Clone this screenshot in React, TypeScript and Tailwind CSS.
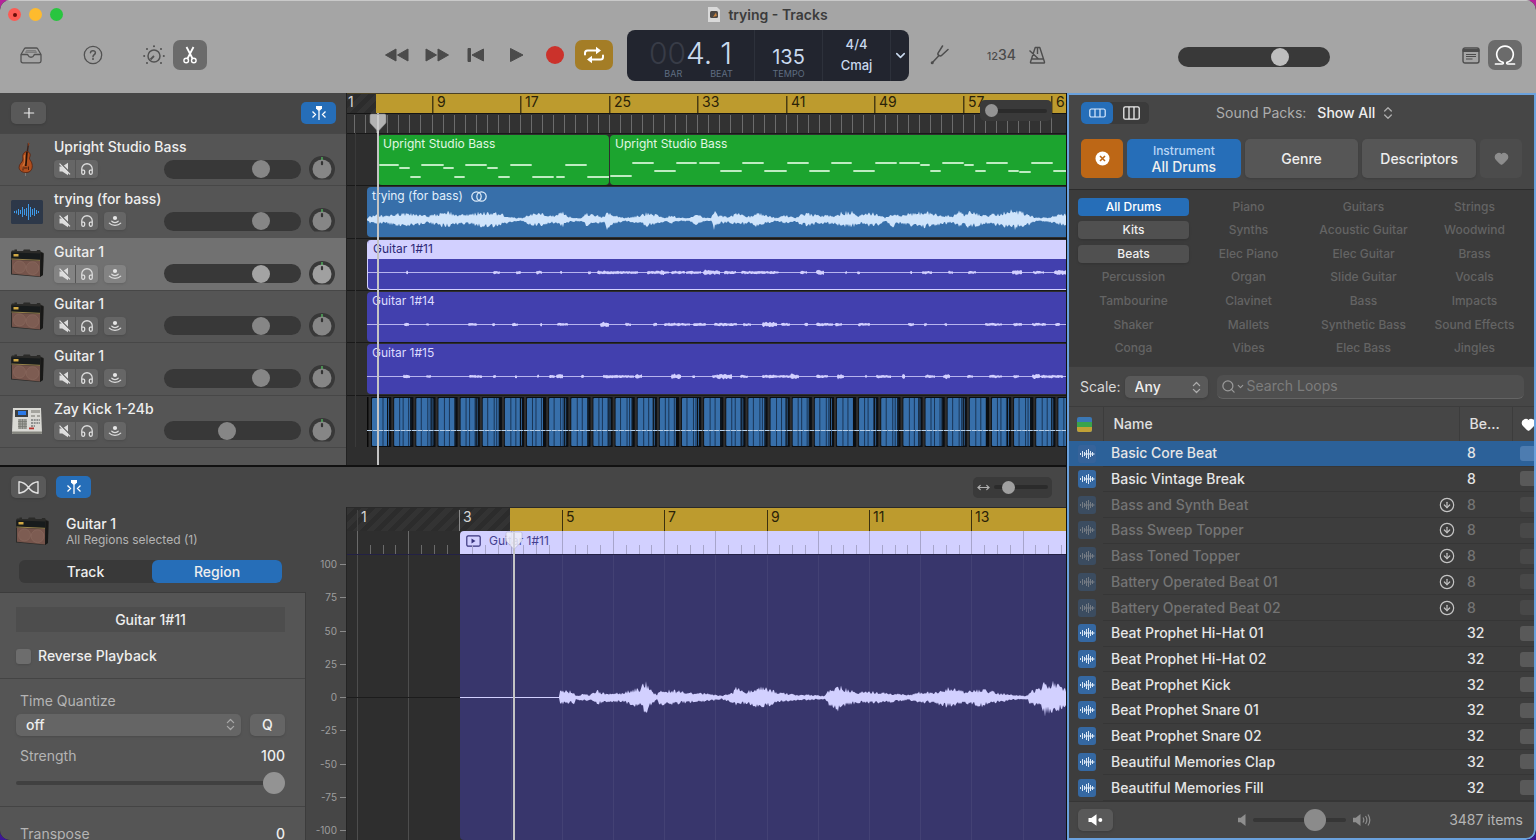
import React from 'react';
import { ChevronsUpDown, CircleArrowDown, Headphones, Heart, MoveHorizontal, Plus, Search, ChevronDown } from 'lucide-react';

type Point = [number, number];
type Span = [number, number, number];

/* ---------- timeline geometry ---------- */
const BAR = 11.07;
const barX = (bar: number) => (bar - 1) * BAR - 3;
const EDIT_BAR = 51.2;
const editX = (bar: number) => 10 + (bar - 1) * EDIT_BAR;

const noise = (n: number) => {
  const s = Math.sin(n * 127.1 + 11.7) * 43758.5453;
  return s - Math.floor(s);
};

const envelopePath = (points: Point[], mid: number, rough: number) => {
  const top: string[] = [];
  const bottom: string[] = [];
  const first = points[0][0];
  const last = points[points.length - 1][0];
  let k = 0;
  for (let x = first; x <= last; x += 1) {
    while (k < points.length - 2 && points[k + 1][0] < x) k += 1;
    const [x0, a0] = points[k];
    const [x1, a1] = points[k + 1];
    const amp = a0 + ((a1 - a0) * (x - x0)) / (x1 - x0);
    const up = amp * (1 - rough * noise(x));
    const down = amp * (1 - rough * noise(x + 900));
    top.push(`${x},${(mid - up).toFixed(1)}`);
    bottom.unshift(`${x},${(mid + down).toFixed(1)}`);
  }
  return `M${top.join('L')}L${bottom.join('L')}Z`;
};

const bassAudio: Point[] = [
  [367, 1], [370, 4], [376, 6], [384, 4], [393, 7], [405, 7], [415, 7], [428, 4], [438, 7], [448, 9], [460, 5], [473, 7],
  [485, 9], [495, 9], [505, 5], [515, 2], [522, 2], [530, 6], [545, 7], [552, 4], [563, 9], [567, 4], [576, 2], [582, 2],
  [586, 7], [600, 4], [604, 3], [607, 11], [613, 5], [625, 2], [636, 4], [648, 8], [660, 4], [665, 2], [671, 5], [678, 2],
  [690, 2], [696, 7], [704, 2], [711, 2], [714, 11], [719, 5], [728, 3], [737, 7], [750, 4], [757, 8], [766, 5], [775, 2],
  [785, 5], [795, 2], [800, 6], [808, 7], [818, 5], [836, 5], [842, 9], [852, 9], [858, 5], [870, 8], [880, 6], [885, 2],
  [893, 8], [900, 4], [908, 7], [925, 9], [940, 6], [953, 4], [959, 10], [964, 6], [969, 10], [985, 5], [1003, 8],
  [1013, 11], [1028, 7], [1036, 2], [1050, 3], [1060, 6], [1066, 7],
];

const takeAudio: Point[] = [
  [559, 1], [560, 8], [574, 7], [576, 2], [583, 4], [590, 3], [597, 8], [604, 5], [622, 5], [632, 9], [640, 11], [645, 18],
  [652, 8], [657, 2], [659, 8], [675, 8], [685, 6], [700, 5], [712, 4], [722, 2], [733, 6], [736, 11], [744, 7], [763, 12],
  [775, 7], [790, 4], [802, 3], [810, 3], [825, 2], [828, 8], [838, 14], [846, 10], [857, 6], [865, 7], [882, 6], [900, 4],
  [910, 3], [917, 6], [935, 6], [942, 10], [951, 11], [965, 7], [982, 10], [996, 6], [1013, 3], [1023, 2], [1028, 3],
  [1030, 8], [1039, 10], [1045, 19], [1051, 15], [1054, 18], [1061, 13], [1066, 10],
];

const take11: Span[] = [
  [405, 407, 1], [492, 499, 1], [515, 520, 1], [535, 541, 1], [559, 561, 1], [587, 590, 1], [596, 637, 1], [646, 668, 1],
  [659, 663, 2], [670, 684, 1], [685, 700, 1], [702, 719, 2], [723, 735, 1], [740, 778, 1], [799, 806, 1], [815, 823, 2],
  [844, 846, 1], [856, 859, 1], [909, 911, 1], [921, 931, 1], [947, 952, 1], [967, 975, 1], [1011, 1021, 2],
  [1032, 1043, 1], [1053, 1065, 2],
];
const take14: Span[] = [
  [404, 409, 1], [426, 429, 1], [468, 477, 1], [492, 495, 1], [512, 518, 1], [540, 542, 1], [557, 568, 1], [600, 609, 2],
  [625, 631, 1], [653, 657, 1], [664, 690, 1], [693, 706, 1], [714, 737, 1], [743, 751, 1], [762, 777, 2], [781, 790, 1],
  [804, 808, 1], [816, 833, 1], [835, 842, 1], [858, 870, 1], [908, 914, 1], [924, 927, 1], [944, 947, 1],
  [985, 1002, 1], [1013, 1022, 1], [1032, 1046, 1], [1055, 1060, 1],
];
const take15: Span[] = [
  [403, 410, 1], [426, 431, 1], [469, 482, 1], [493, 496, 1], [515, 517, 1], [537, 539, 1], [549, 555, 1], [556, 563, 2],
  [581, 584, 1], [603, 634, 1], [635, 642, 2], [671, 681, 2], [692, 695, 1], [712, 716, 1], [716, 732, 2], [740, 748, 1],
  [762, 790, 1], [790, 799, 2], [816, 828, 1], [837, 844, 2], [865, 867, 1], [876, 891, 1], [902, 905, 2],
  [925, 935, 1], [943, 950, 2], [967, 973, 1], [989, 1002, 1], [1013, 1019, 1], [1032, 1040, 2], [1040, 1063, 1],
];

const notesA: Span[] = [
  [379, 399, 164], [399, 410, 167], [410, 421, 176], [421, 444, 164], [443, 454, 167], [454, 465, 176], [465, 487, 164],
  [487, 498, 167], [498, 510, 176], [510, 532, 164], [532, 554, 176], [556, 565, 176], [565, 587, 164], [587, 610, 176],
];
const notesB: Span[] = [
  [610, 632, 175], [632, 654, 162], [654, 676, 170], [676, 697, 162], [699, 720, 162], [720, 742, 170], [742, 764, 162],
  [764, 787, 170], [787, 809, 162], [809, 830, 170], [831, 852, 162], [853, 875, 170], [875, 897, 162], [899, 920, 162],
  [920, 930, 164], [930, 941, 170], [942, 964, 162], [964, 974, 164], [975, 986, 170], [986, 1008, 162],
  [1008, 1019, 170], [1019, 1031, 171], [1031, 1053, 162], [1053, 1067, 170],
];

/* ---------- small drawings ---------- */
const CatchIcon = () => (
  <svg width="16" height="16" viewBox="0 0 16 16" fill="none" stroke="white" strokeWidth="1.3">
    <path d="M5 1h6v2.500L9 5.500H7L5 3.500z" fill="white" stroke="none" />
    <path d="M8 4v11M1.500 6.500 4.500 9.500 1.500 12.500M14.500 6.500 11.500 9.500l3 3" />
  </svg>
);

const AmpIcon = () => (
  <svg width="36" height="32" viewBox="0 0 36 32">
    <path d="M3 2.500h2.500v-1h2.500v1.500h6l.8-1.500h6l.8 1.500h6l.5-1h3l.5 1.500 3 1.500-.6 22-3.400 2L2 26.500V4z" fill="#2b2b29" />
    <path d="M31.500 4.500 34.500 5.500l-.6 21.500-2.900 2z" fill="#181817" />
    <path d="M2.500 4.500 31 5.500v6.500l-28.500-1z" fill="#171b1c" />
    <path d="M4.500 6h5v2.600l-5-.2z" fill="#d2a944" />
    <path d="M2.500 11 31 12.300" stroke="#b59a54" strokeWidth=".8" />
    <path d="M3 11.700 31 13V28.500L3 25.800z" fill="#75544b" />
    <circle cx="10.500" cy="19" r="6" fill="#7d5c52" stroke="#8b6b5f" strokeWidth=".6" />
    <circle cx="23.500" cy="20.200" r="6.400" fill="#7d5c52" stroke="#8b6b5f" strokeWidth=".6" />
  </svg>
);

const BassIcon = () => (
  <svg width="20" height="36" viewBox="0 0 20 36">
    <path d="M11.500 1 9.800 14" stroke="#3c2018" strokeWidth="1.500" />
    <path d="M11 .8 12.300 2l-1 1.500" stroke="#a14a22" fill="none" />
    <path
      d="M7 11c1.500-2 4.500-1.800 5.700.2 1.500 2.500-.6 4-.2 5.600.5 1.700 3.200 3.500 2.700 8.300-.5 4.200-3.300 5.400-6.400 5.400S2.300 29 2.100 25.500c-.2-3.500 3.200-4.900 3.700-7.500.4-2-.8-4.800 1.200-7z"
      fill="#b04f1e"
      stroke="#55200c"
      strokeWidth=".8"
    />
    <path d="M7.500 13c-.8 3 1 5 .2 7.500-.8 2-2.500 3-2.200 6" stroke="#d57638" fill="none" strokeWidth="1.200" />
    <path d="M10 10 8.800 24" stroke="#221109" strokeWidth="1.600" />
    <path d="M6 24.500v4M11.500 24.500v3.500M7 26h3.500" stroke="#32140a" strokeWidth=".8" />
    <path d="M8.500 31v3" stroke="#777" />
  </svg>
);

const AudioIcon = () => (
  <svg width="32" height="24" viewBox="0 0 32 24">
    <rect width="32" height="24" rx="1.500" fill="#2d3849" />
    <path d="M3.500 11v2M5.500 10.500v3M7.500 9v6M9.500 10v4M11.500 7v10M13.500 9v6M15.500 8v8M17.500 4v16M19.500 7v10M21.500 9v6M23.500 8v8M25.500 10v4M27.500 11v2" stroke="#3f9bea" />
  </svg>
);

const SamplerIcon = () => (
  <svg width="32" height="28" viewBox="0 0 32 28">
    <path d="M2 1h28l1 24.500q0 1.500-1.500 1.500h-27Q1 27 1 25.500z" fill="#d9d9d4" />
    <path d="M1 24.500h30v1q0 1.500-1.500 1.500h-27Q1 27 1 25.500z" fill="#85867f" />
    <rect x="4" y="3" width="13" height="7" fill="#3a3e42" />
    <rect x="7" y="4" width="8" height="4" fill="#2b7ae8" />
    <g fill="#a4a49e">
      <rect x="20" y="3" width="9" height="3" />
      <rect x="20" y="8" width="4" height="2" />
      <rect x="26" y="8" width="3" height="2" />
      <rect x="7" y="12" width="9" height="10" />
    </g>
    <path d="M7 14.500h9M7 17h9M7 19.500h9M9 12v10M11.500 12v10M14 12v10" stroke="#74756f" strokeWidth=".7" />
    <path d="M20 13h9M20 16h9M20 19h4" stroke="#777a79" strokeWidth="1.500" strokeDasharray="2 .7" />
    <rect x="18" y="20.500" width="5" height="1.800" fill="#b5322c" />
  </svg>
);

const MuteIcon = ({ back }: { back: string }) => (
  <svg width="14" height="14" viewBox="0 0 14 14">
    <path d="M1.500 4.600h2.800L10 .8v12.400L4.300 9.400H1.500z" fill="#dcdcdc" />
    <path d="M2.500 1.200 13.200 12" stroke={back} strokeWidth="1.600" />
    <path d="M1.500 1.600 12 12.400" stroke="#e2e2e2" strokeWidth="1.200" />
  </svg>
);

const MonitorIcon = () => (
  <svg width="14" height="12" viewBox="0 0 14 12" fill="none" stroke="#dcdcdc" strokeWidth="1.200">
    <circle cx="7" cy="3" r="2.100" fill="#e6e6e6" stroke="none" />
    <path d="M3.700 6.200C5 8 9 8 10.300 6.200M1.300 8.200c2.700 3 8.700 3 11.400 0" strokeLinecap="round" />
  </svg>
);

const Knob = ({ bright }: { bright?: boolean }) => (
  <svg width="28" height="28" viewBox="0 0 28 28" className="shrink-0" role="img" aria-label="Pan">
    <path d="M6.500 24.500A13 13 0 1 1 21.500 24.500" fill="#383838" />
    <circle cx="14" cy="14" r="9.500" fill={bright ? '#a0a0a0' : '#868686'} />
    <path d="M14 7v2.200" stroke="#333" strokeWidth="2.200" strokeLinecap="round" />
    <path d="M14 2v3" stroke="#56c763" strokeWidth="1.200" />
  </svg>
);

const LoopWave = ({ dim, flat }: { dim?: boolean; flat?: boolean }) => (
  <svg width="18" height="18" viewBox="0 0 18 18" className="block">
    <rect width="18" height="18" rx="3" fill={flat ? '#36639a' : dim ? '#3b4c60' : '#3568a2'} />
    <g stroke={dim ? '#747b83' : '#dce8f5'}>
      <path d="M2.500 8v2M4.500 6v6M6.500 7v4M8.500 5v8M10.500 4v10M12.500 6v6M14.500 7v4" />
      <path d="M7 9h9.500" strokeWidth="1.200" />
    </g>
  </svg>
);

const SpeakerIcon = ({ waves }: { waves?: boolean }) => (
  <svg width="20" height="14" viewBox="0 0 20 14" fill="none" stroke="#8e8e8e" strokeWidth="1.200">
    <path d="M1 4.800h2.800L8.500 1v12L3.800 9.200H1z" fill="#8e8e8e" stroke="none" />
    {waves && <path d="M11 4.500c1 1.500 1 3.500 0 5M13.500 3c1.700 2.500 1.700 5.500 0 8M16 1.500c2.300 3.500 2.300 7.500 0 11" />}
  </svg>
);

/* ---------- title bar ---------- */
const TitleBar = () => (
  <header className="flex h-[93px] shrink-0 flex-col border-t border-[#c9c9c9] bg-[#a5a5a5] text-[#4b4b4b]">
    <div className="grid h-[27px] grid-cols-[1fr_auto_1fr] items-center">
      <div className="flex gap-2 pl-2">
        <button aria-label="Close" className="flex size-[13px] items-center justify-center rounded-full bg-[#fd5b54]">
          <span className="size-1 rounded-full bg-[#6c0d08]" />
        </button>
        <button aria-label="Minimize" className="size-[13px] rounded-full bg-[#febb2e]" />
        <button aria-label="Zoom window" className="size-[13px] rounded-full bg-[#29c53f]" />
      </div>
      <h1 className="flex items-center gap-2 text-sm font-semibold text-[#3c3c3c]">
        <svg width="12" height="15" viewBox="0 0 12 15">
          <path d="M0 0h9l3 3v12H0z" fill="#d9d9d9" />
          <rect x="2" y="4" width="8" height="7" rx="1.500" fill="#4b4744" />
          <path d="M5 10 8 5.500l.8 3.500z" fill="#c9823c" />
        </svg>
        trying - Tracks
      </h1>
      <div />
    </div>
    <div className="flex h-[54px] items-center pl-5 pr-[14px]">
      <button aria-label="Library">
        <svg width="22" height="17" viewBox="0 0 22 17" fill="none" stroke="#525252" strokeWidth="1.300" strokeLinejoin="round">
          <path d="M1 7.500 4.500 1.500Q5 1 5.500 1h11q.5 0 1 .5L21 7.500V14q0 1.800-1.800 1.800H2.800Q1 15.800 1 14z" />
          <path d="M1 7.500h6.200c.6 0 .8.500 1 1 .8 2.300 4.800 2.300 5.600 0 .2-.5.400-1 1-1H21" />
          <path d="M5.500 5.500 6.500 3.500h9l1 2z" fill="#8a8a8a" stroke="#777" strokeWidth=".8" />
        </svg>
      </button>
      <button aria-label="Quick Help" className="ml-[41px]">
        <svg width="20" height="20" viewBox="0 0 20 20" fill="none" stroke="#525252" strokeWidth="1.300">
          <circle cx="10" cy="10" r="8.700" />
          <path d="M7.500 7.800C7.600 4.800 12.600 5 12.400 7.900 12.300 9.700 10 9.700 10 11.700" strokeLinecap="round" strokeWidth="1.500" />
          <circle cx="10" cy="14" r="1" fill="#525252" stroke="none" />
        </svg>
      </button>
      <button aria-label="Smart Controls" className="ml-10">
        <svg width="22" height="20" viewBox="0 0 22 20" fill="none" stroke="#525252" strokeWidth="1.500">
          <circle cx="11" cy="11" r="6" />
          <path d="M7.500 14.500 11 11" strokeWidth="1.800" />
          <path
            d="M11 1.200v.01M4 4v.01M18 4v.01M1.200 11v.01M20.800 11v.01M4 18v.01M18 18v.01"
            strokeWidth="2.100"
            strokeLinecap="round"
          />
        </svg>
      </button>
      <button aria-label="Editors" className="ml-2 flex h-[30px] w-[34px] items-center justify-center rounded-[7px] bg-[#6b6b6b]">
        <svg width="14" height="18" viewBox="0 0 14 18" fill="none" stroke="white" strokeWidth="1.400">
          <circle cx="3.200" cy="14.500" r="2.300" />
          <circle cx="10.800" cy="14.500" r="2.300" />
          <path d="M4.500 12.500 10.500 1M9.500 12.500 3.500 1" strokeWidth="1.800" />
        </svg>
      </button>

      <div className="flex-[177]" />

      <div className="flex items-center text-[#4b4b4b]">
        <button aria-label="Rewind">
          <svg width="25" height="16" viewBox="0 0 25 16" fill="currentColor" stroke="currentColor" strokeLinejoin="round">
            <path d="M12 2v12L1.500 8zM24 2v12L13.500 8z" />
          </svg>
        </button>
        <button aria-label="Forward" className="ml-4">
          <svg width="25" height="16" viewBox="0 0 25 16" fill="currentColor" stroke="currentColor" strokeLinejoin="round">
            <path d="M1 2v12l10.500-6zM13 2v12l10.500-6z" />
          </svg>
        </button>
        <button aria-label="Go to Beginning" className="ml-[17px]">
          <svg width="18" height="16" viewBox="0 0 18 16" fill="currentColor" stroke="currentColor" strokeLinejoin="round">
            <path d="M1 1.500h2.500v13H1zM16.500 2v12L5 8z" />
          </svg>
        </button>
        <button aria-label="Play" className="ml-6">
          <svg width="15" height="16" viewBox="0 0 15 16" fill="currentColor" stroke="currentColor" strokeLinejoin="round">
            <path d="M1.500 1.500v13L14 8z" />
          </svg>
        </button>
        <button aria-label="Record" className="ml-[22px] size-[18px] rounded-full bg-[#cb322b]" />
        <button aria-label="Cycle" className="ml-[11px] flex h-[30px] w-[38px] items-center justify-center rounded-[7px] bg-[#a47d26]">
          <svg width="22" height="18" viewBox="0 0 22 18" fill="none" stroke="white" strokeWidth="2" strokeLinecap="round">
            <path d="M2 8.500V7q0-2.500 2.500-2.500H14M20 9.500V11q0 2.500-2.500 2.500H8" />
            <path d="M13 .8 18 4.500 13 8.200zM9 9.800 4 13.500 9 17.200z" fill="white" stroke="none" />
          </svg>
        </button>

        <div className="ml-[14px] flex h-[51px] w-[282px] overflow-hidden rounded-lg bg-[#22252f] text-[#c9d9ee]">
          <div className="relative flex w-[128px] flex-col items-center border-r border-[#2d313b]">
            <div className="flex h-[48px] items-center text-[30px] font-light">
              <span className="text-[#383c47]">00</span>
              <span>4.</span>
              <span className="ml-2">1</span>
            </div>
            <div className="absolute inset-x-0 bottom-[3px] flex justify-center gap-7 pl-4 text-[9px] leading-[9px] text-[#5f6d81]">
              <span>BAR</span>
              <span>BEAT</span>
            </div>
          </div>
          <div className="flex w-[68px] flex-col items-center border-r border-[#2d313b] pt-[15px]">
            <span className="text-xl leading-6">135</span>
            <span className="text-[9px] leading-[9px] text-[#5f6d81]">TEMPO</span>
          </div>
          <div className="flex w-[68px] flex-col items-center justify-center gap-[5px] border-r border-[#2d313b] pb-[2px] text-[13px] font-medium leading-4">
            <span>4/4</span>
            <span>Cmaj</span>
          </div>
          <button aria-label="Display mode" className="flex flex-1 items-center justify-center">
            <ChevronDown size={15} strokeWidth={2.5} />
          </button>
        </div>

        <button aria-label="Tuner" className="ml-[21px]">
          <svg width="19" height="20" viewBox="0 0 19 20" fill="none" stroke="#4d4d4d" strokeWidth="1.500" strokeLinecap="round">
            <path d="M12.500 1 8.200 7.800c-1.200 2 1.800 4.200 3.600 2.500L18 4.500M9 10.500 2 18" />
            <circle cx="2.200" cy="17.800" r="1.500" fill="#4d4d4d" stroke="none" />
          </svg>
        </button>
        <button aria-label="Count In" className="ml-[38px] flex items-baseline text-sm font-medium leading-4">
          <span className="text-[10px]">1</span>
          <span className="text-[11px]">2</span>
          <span>34</span>
        </button>
        <button aria-label="Metronome" className="ml-3">
          <svg width="19" height="18" viewBox="0 0 19 18" fill="none" stroke="#4d4d4d" strokeWidth="1.400" strokeLinejoin="round">
            <path d="M7.200 1.500h4.600L16.500 16q.2 1-.8 1H3.300q-1 0-.8-1zM3.500 13h12M1.500 4.500l9 8.500M9.500 1v7" />
          </svg>
        </button>
      </div>

      <div className="flex-[131]" />
      <input
        type="range"
        aria-label="Master volume"
        defaultValue={70}
        className="mt-1 h-5 w-[152px] appearance-none rounded-full bg-[#393939] px-px [&::-webkit-slider-thumb]:size-[18px] [&::-webkit-slider-thumb]:appearance-none [&::-webkit-slider-thumb]:rounded-full [&::-webkit-slider-thumb]:bg-[#bebebe]"
      />
      <div className="flex-[132]" />

      <button aria-label="Note Pad">
        <svg width="18" height="17" viewBox="0 0 18 17" fill="none" stroke="#4d4d4d">
          <rect x="1" y="1" width="16" height="15" rx="2" strokeWidth="1.400" />
          <path d="M1 2.500h16v2H1z" fill="#4d4d4d" />
          <path d="M4 7.500h10M4 9.500h10M4 12h6.500" strokeWidth="1.200" />
        </svg>
      </button>
      <button aria-label="Loop Browser" className="ml-2 flex h-[30px] w-[34px] items-center justify-center rounded-[7px] bg-[#6b6b6b]">
        <svg width="22" height="21" viewBox="0 0 22 21" fill="none" stroke="white" strokeWidth="1.700" strokeLinecap="round" strokeLinejoin="round">
          <path d="M1.500 19h6.500q1.800-.2 1-1.600A8.300 8.300 0 1 1 13 17.400q-.8 1.400 1 1.600h6.500" />
        </svg>
      </button>
    </div>
  </header>
);

/* ---------- track list ---------- */
interface Track {
  name: string;
  icon: React.ReactNode;
  monitor: boolean;
  volume: number;
  selected?: boolean;
}

const tracks: Track[] = [
  { name: 'Upright Studio Bass', icon: <BassIcon />, monitor: false, volume: 74 },
  { name: 'trying (for bass)', icon: <AudioIcon />, monitor: true, volume: 74 },
  { name: 'Guitar 1', icon: <AmpIcon />, monitor: true, volume: 74, selected: true },
  { name: 'Guitar 1', icon: <AmpIcon />, monitor: true, volume: 74 },
  { name: 'Guitar 1', icon: <AmpIcon />, monitor: true, volume: 74 },
  { name: 'Zay Kick 1-24b', icon: <SamplerIcon />, monitor: true, volume: 45 },
];

const TrackRow = ({ name, icon, monitor, volume, selected }: Track) => {
  const chip = selected ? 'bg-[#838383]' : 'bg-[#666666]';
  return (
    <li className={`flex border-t ${selected ? 'border-[#717171] bg-[#717171]' : 'border-[#474747] bg-[#555555]'}`}>
      <div className="flex w-[54px] items-center justify-center">{icon}</div>
      <div className="flex flex-1 flex-col gap-[3px] pt-[5px]">
        <span className="text-sm font-medium leading-4 text-[#eeeeee]">{name}</span>
        <div className="flex h-[22px] items-center pr-[10px]">
          <div className={`flex h-[18px] overflow-hidden rounded shadow-sm ${chip}`}>
            <button aria-label="Mute" className="flex w-[22px] items-center justify-center border-r border-[#555555]">
              <MuteIcon back={selected ? '#838383' : '#666666'} />
            </button>
            <button aria-label="Solo" className="flex w-[22px] items-center justify-center text-[#dcdcdc]">
              <Headphones size={14} strokeWidth={2.2} />
            </button>
          </div>
          {monitor && (
            <button aria-label="Input monitoring" className={`ml-[6px] flex h-[18px] w-[22px] items-center justify-center rounded shadow-sm ${chip}`}>
              <MonitorIcon />
            </button>
          )}
          <input
            type="range"
            aria-label={`${name} volume`}
            defaultValue={volume}
            className={`ml-auto mr-[7px] h-[19px] w-[137px] appearance-none rounded-full bg-[#383838] [&::-webkit-slider-thumb]:size-[18px] [&::-webkit-slider-thumb]:appearance-none [&::-webkit-slider-thumb]:rounded-full ${
              selected ? '[&::-webkit-slider-thumb]:bg-[#a3a3a3]' : '[&::-webkit-slider-thumb]:bg-[#868686]'
            }`}
          />
          <Knob bright={selected} />
        </div>
      </div>
    </li>
  );
};

const TrackList = () => (
  <section className="flex w-[347px] shrink-0 flex-col border-r border-[#222222] bg-[#555555]">
    <div className="flex h-10 items-center justify-between bg-[#464646] pl-[11px] pr-[10px]">
      <button aria-label="Add track" className="flex h-[22px] w-[35px] items-center justify-center rounded-[5px] bg-[#595959] text-[#eeeeee] shadow-sm">
        <Plus size={16} strokeWidth={1.8} />
      </button>
      <button aria-label="Catch playhead" className="flex h-[22px] w-[35px] items-center justify-center rounded-[5px] bg-[#266eb8]">
        <CatchIcon />
      </button>
    </div>
    <ul className="grid h-[314px] grid-rows-6">
      {tracks.map((t, i) => (
        <TrackRow key={i} {...t} />
      ))}
    </ul>
    <div className="flex-1 border-t border-[#474747]" />
  </section>
);

/* ---------- arrangement ---------- */
const hatch = 'bg-[repeating-linear-gradient(135deg,#333333_0px,#333333_5px,#2c2c2c_5px,#2c2c2c_10px)]';

const Notes = ({ notes, x }: { notes: Span[]; x: number }) => (
  <svg width="460" height="50" viewBox={`${x} 135 460 50`} className="absolute left-0 top-0">
    {notes.map(([a, b, y], i) => (
      <rect key={i} x={a + 0.3} y={y} width={b - a - 0.6} height="2" fill="#bfecc2" />
    ))}
  </svg>
);

const GuitarWave = ({ spans }: { spans: Span[] }) => (
  <svg width="700" height="50" viewBox="367 0 700 50" className="absolute left-0 top-0">
    <path d="M367 32.500h700" stroke="#b7b4ee" />
    {spans.map(([a, b, amp], i) => (
      <path
        key={i}
        d={envelopePath([[a, 1], [Math.min(a + 1, b - 0.5), amp + 1], [b, amp + 0.5]], 32.5, 0.6)}
        fill="#d2d0ff"
      />
    ))}
  </svg>
);

const GuitarRegion = ({ name, spans, selected }: { name: string; spans: Span[]; selected?: boolean }) => (
  <div
    className={`relative ml-5 h-[50px] flex-1 overflow-hidden rounded-l-[4px] bg-[#4240ae] text-xs leading-[18px] ${
      selected ? 'border-b border-l border-[#d2d0ff] text-[#2d2875]' : 'text-[#dddcff]'
    }`}
  >
    <div className={`h-[19px] pl-[5px] ${selected ? 'bg-[#d2d0ff]' : ''}`}>{name}</div>
    <GuitarWave spans={spans} />
  </div>
);

const Drums = () => (
  <svg width="700" height="50" viewBox="367 0 700 50" className="ml-5 block h-[50px] flex-1" preserveAspectRatio="xMinYMin slice">
    <path d="M367 0h1.500v50H367z" fill="#080808" />
    {Array.from({ length: 32 }, (_, i) => {
      const x = 372 + i * 22.14;
      const cuts = i % 3 === 0 ? [5.5, 10.5] : i % 3 === 1 ? [5, 8.5, 14] : [4.5, 11, 13.5];
      return (
        <g key={i}>
          <rect x={x - 0.8} width="20" height="50" fill="#0b0e12" />
          <rect x={x} y="1" width="17" height="48" rx="1" fill="#376faa" />
          {cuts.map((c) => (
            <rect key={c} x={x + c} y="1" width="1" height="48" fill="#193557" />
          ))}
          <rect x={x + 15 + (i % 2)} y="0" width="1.2" height="50" fill="#0b0e12" />
        </g>
      );
    })}
    <path d="M367 33.500h700" stroke="#b8cfe8" strokeDasharray="5 .6" />
  </svg>
);

const Playhead = ({ light }: { light?: boolean }) => (
  <svg width="20" height="20" viewBox="0 0 20 20" className="absolute -left-[9px] top-0">
    <path
      d="M3.500 1h13q1.500 0 1.500 1.500v6.500q0 1-.8 1.800L10.500 18q-.5.500-1 0L2.800 10.800Q2 10 2 9V2.500Q2 1 3.500 1z"
      fill={light ? '#efeffa' : '#b3b3b3'}
      stroke={light ? '#a9a8c6' : '#8f8f8f'}
      strokeWidth=".6"
      opacity={light ? 0.85 : 1}
    />
    <path d="M10 2v18" stroke={light ? '#b9b9c4' : '#e4e4e4'} />
  </svg>
);

const laneClass = 'flex border-t border-[#191919] pt-px';

const Arrangement = () => (
  <section className="relative min-w-0 flex-1 overflow-hidden bg-[#2e2e2e]">
    <div className="relative h-10 overflow-hidden bg-[#323232] text-sm">
      <div className="flex h-5 border-t border-[#4a4126]">
        <div className={`w-[29px] ${hatch}`} />
        <div className="flex-1 bg-[#bd9b2e]" />
      </div>
      <svg className="absolute inset-0 size-full">
        <path d="M0 20.500h1400" stroke="#151515" />
        {Array.from({ length: 64 }, (_, i) => (
          <rect key={i} x={Math.round(barX(i + 2)) - 1} y="22" width="1" height="18" fill="#6c6c6c" />
        ))}
        {Array.from({ length: 8 }, (_, i) => (
          <rect key={i} x={Math.round(barX(9 + i * 8)) - 1} y="3" width="1.500" height="17" fill="#4a3c12" />
        ))}
      </svg>
      <span className="absolute left-px top-0 leading-[18px] text-[#d6d6d6]">1</span>
      {[9, 17, 25, 33, 41, 49, 57, 65].map((n) => (
        <span key={n} className="absolute top-0 leading-[18px] text-[#2a2208]" style={{ left: Math.round(barX(n)) + 4 }}>
          {n}
        </span>
      ))}
    </div>

    <div className="relative grid h-[314px] grid-rows-6">
      <div className={laneClass}>
        <div className="relative ml-[31px] h-[50px] w-[231px] overflow-hidden rounded-[4px] bg-[#1ca42f] pl-[5px] text-xs leading-[18px] text-[#e0f7e2]">
          Upright Studio Bass
          <Notes notes={notesA} x={378} />
        </div>
        <div className="relative ml-px h-[50px] flex-1 overflow-hidden rounded-l-[4px] bg-[#1ca42f] pl-[5px] text-xs leading-[18px] text-[#e0f7e2]">
          Upright Studio Bass
          <Notes notes={notesB} x={610} />
        </div>
      </div>
      <div className={laneClass}>
        <div className="relative ml-5 h-[50px] flex-1 overflow-hidden rounded-l-[4px] bg-[#376faa] pl-[5px] text-xs leading-[18px] text-[#e2effc]">
          <span className="flex items-center gap-2">
            trying (for bass)
            <svg width="16" height="11" viewBox="0 0 16 11" fill="none" stroke="#e2effc" strokeWidth="1.200">
              <circle cx="5.500" cy="5.500" r="4.700" />
              <circle cx="10.500" cy="5.500" r="4.700" />
            </svg>
          </span>
          <svg width="700" height="50" viewBox="367 0 700 50" className="absolute left-0 top-0">
            <path d={envelopePath(bassAudio, 32.5, 0.55)} fill="#cfe4fb" />
          </svg>
        </div>
      </div>
      <div className={laneClass}>
        <GuitarRegion name="Guitar 1#11" spans={take11} selected />
      </div>
      <div className={laneClass}>
        <GuitarRegion name="Guitar 1#14" spans={take14} />
      </div>
      <div className={laneClass}>
        <GuitarRegion name="Guitar 1#15" spans={take15} />
      </div>
      <div className={laneClass}>
        <Drums />
      </div>
      <div className="absolute inset-y-0 left-2 w-px bg-[#3a3a3a]" />
    </div>

    <div className="absolute bottom-0 left-[30px] top-5 w-[2px] bg-[#c4c4c4]">
      <Playhead />
    </div>
    <label className="absolute right-[14px] top-[7px] flex h-[21px] w-[72px] items-center rounded-[5px] bg-[#3a3a3a] px-[5px]">
      <input
        type="range"
        aria-label="Horizontal zoom"
        defaultValue={0}
        className="h-1 w-full appearance-none rounded-full bg-[#2b2b2b] [&::-webkit-slider-thumb]:size-[13px] [&::-webkit-slider-thumb]:appearance-none [&::-webkit-slider-thumb]:rounded-full [&::-webkit-slider-thumb]:bg-[#949494]"
      />
    </label>
  </section>
);

/* ---------- inspector and audio editor ---------- */
const Inspector = () => (
  <section className="flex w-[306px] shrink-0 flex-col text-sm text-[#eeeeee]">
    <div className="flex h-[49px] items-center gap-[16px] pl-[14px]">
      <AmpIcon />
      <div>
        <div className="font-medium leading-4">Guitar 1</div>
        <div className="text-xs leading-4 text-[#b4b4b4]">All Regions selected (1)</div>
      </div>
    </div>
    <div className="mx-[19px] mt-1 grid h-[23px] w-[263px] shrink-0 grid-cols-[133fr_130fr] rounded-[6px] bg-[#393939] font-medium leading-[22px]">
      <button>Track</button>
      <button className="rounded-[6px] bg-[#266eb8]">Region</button>
    </div>
    <div className="mt-[9px] flex flex-1 flex-col overflow-hidden border-r border-t border-[#3c3c3c] bg-[#555555]">
      <div className="flex h-[86px] shrink-0 flex-col border-b border-[#444444] px-4 pt-[14px]">
        <input
          aria-label="Region name"
          defaultValue="Guitar 1#11"
          className="h-[25px] w-[269px] bg-[#4d4d4d] text-center font-medium outline-none"
        />
        <label className="mt-4 flex items-center gap-[7px] font-medium leading-4">
          <input type="checkbox" className="size-[15px] appearance-none rounded-[3px] bg-[#6d6d6d] shadow-sm" />
          Reverse Playback
        </label>
      </div>
      <div className="h-32 shrink-0 border-b border-[#444444] px-4 pt-[14px]">
        <label htmlFor="quantize" className="block pl-1 leading-4 text-[#b4b4b4]">
          Time Quantize
        </label>
        <div className="mt-[5px] flex gap-[9px]">
          <div className="relative">
            <select
              id="quantize"
              className="block h-[22px] w-[225px] appearance-none rounded-[5px] bg-[#656565] pl-[10px] font-medium leading-5 shadow-sm outline-none"
            >
              <option>off</option>
            </select>
            <ChevronsUpDown size={15} className="pointer-events-none absolute right-[3px] top-[3px] text-[#a8a8a8]" />
          </div>
          <button className="h-[22px] w-[35px] rounded-[5px] bg-[#656565] font-medium leading-5 shadow-sm">Q</button>
        </div>
        <div className="mt-3 flex w-[269px] justify-between pl-1 leading-4">
          <label htmlFor="strength" className="text-[#b4b4b4]">
            Strength
          </label>
          <span className="font-medium">100</span>
        </div>
        <input
          id="strength"
          type="range"
          defaultValue={100}
          className="mt-[17px] block h-1 w-[269px] appearance-none rounded-full bg-[#404040] [&::-webkit-slider-thumb]:size-[22px] [&::-webkit-slider-thumb]:appearance-none [&::-webkit-slider-thumb]:rounded-full [&::-webkit-slider-thumb]:bg-[#939393]"
        />
      </div>
      <div className="flex w-[285px] justify-between pl-5 pt-[19px] leading-4">
        <span className="text-[#b4b4b4]">Transpose</span>
        <span className="font-medium">0</span>
      </div>
    </div>
  </section>
);

const EditorCanvas = () => (
  <section className="relative flex min-w-0 flex-1 flex-col overflow-hidden bg-[#2e2e2e]">
    <div className="relative flex h-6 shrink-0 border-t border-[#2a2a2a] text-sm">
      <div className={`w-[163px] ${hatch}`} />
      <div className="flex-1 bg-[#bd9b2e]" />
      <svg className="absolute inset-0 size-full">
        {[1, 3, 5, 7, 9, 11, 13].map((n) => (
          <rect
            key={n}
            x={Math.round(editX(n))}
            y="2"
            width="1"
            height="21"
            fill={n === 3 ? '#8a8a8a' : n === 1 ? '#444' : '#3c300e'}
          />
        ))}
      </svg>
      {[1, 3, 5, 7, 9, 11, 13].map((n) => (
        <span
          key={n}
          className={`absolute top-0 leading-[17px] ${n < 4 ? 'text-[#d6d6d6]' : 'text-[#2a2208]'}`}
          style={{ left: Math.round(editX(n)) + 4 }}
        >
          {n}
        </span>
      ))}
    </div>
    <div className="relative flex h-[23px] shrink-0">
      <div className="w-[113px] bg-[#2e2e2e]" />
      <div className="flex flex-1 items-center gap-2 rounded-tl-[4px] bg-[#d2d0ff] pb-[3px] pl-[6px] text-xs text-[#443f8f]">
        <svg width="15" height="12" viewBox="0 0 15 12" fill="none" stroke="#37337c" strokeWidth="1.200">
          <rect x=".8" y=".8" width="13.400" height="10.400" rx="1.500" />
          <path d="M5.500 3.500v5l4-2.500z" fill="#37337c" stroke="none" />
        </svg>
        Guitar 1#11
      </div>
      <svg className="absolute inset-0 size-full">
        {Array.from({ length: 60 }, (_, i) => {
          const x = Math.round(editX(1 + i / 4));
          const major = i % 4 === 0;
          return <rect key={i} x={x} y={major ? 0 : 14} width="1" height="23" fill={x < 111 ? '#6a6a6a' : '#a7a5cb'} opacity={i === 8 ? 0 : 1} />;
        })}
      </svg>
    </div>
    <div className="relative flex flex-1 border-t border-[#232145]">
      <div className="w-[113px]" />
      <div className="mb-[2px] flex-1 rounded-bl-[4px] bg-[#38366c]" />
      <svg className="absolute inset-0 size-full">
        {Array.from({ length: 15 }, (_, i) => (
          <rect key={i} x={Math.round(editX(i + 1))} width="1" height="100%" fill="white" opacity={i < 2 ? 0.15 : i === 2 ? 0 : 0.06} />
        ))}
      </svg>
      <svg width="720" height="40" viewBox="347 0 720 40" className="absolute left-0 top-1/2 -mt-[22px]">
        <path d="M347 20.500h113" stroke="#1c1c1c" />
        <path d="M460 20.500h100" stroke="#d2d0ff" strokeWidth="1.200" />
        <path d={envelopePath(takeAudio, 20.5, 0.5)} fill="#d2d0ff" />
      </svg>
    </div>
    <div className="absolute bottom-0 left-[166px] top-6 w-[2px] bg-[#c4c4c4]">
      <Playhead light />
    </div>
  </section>
);

const Editor = () => (
  <div className="flex flex-1 flex-col bg-[#464646]">
    <div className="flex h-10 shrink-0 items-center gap-[10px] pl-[11px] pr-[14px]">
      <button aria-label="Flex" className="flex h-[22px] w-[35px] items-center justify-center rounded-[5px] bg-[#595959] shadow-sm">
        <svg width="21" height="13" viewBox="0 0 21 13" fill="none" stroke="#e0e0e0" strokeWidth="1.400" strokeLinejoin="round">
          <path d="M1 .8v11.400Q7 11.500 10.500 6.500 14 1.500 20 .8v11.400Q14 11.500 10.500 6.500 7 1.500 1 .8z" />
        </svg>
      </button>
      <button aria-label="Catch playhead" className="flex h-[22px] w-[35px] items-center justify-center rounded-[5px] bg-[#266eb8]">
        <CatchIcon />
      </button>
      <label className="ml-auto flex h-[21px] w-[79px] items-center gap-1 rounded-[5px] bg-[#3a3a3a] px-1 text-[#b0b0b0]">
        <MoveHorizontal size={13} strokeWidth={2.2} className="shrink-0" />
        <input
          type="range"
          aria-label="Editor zoom"
          defaultValue={19}
          className="h-1 min-w-0 flex-1 appearance-none rounded-full bg-[#2b2b2b] [&::-webkit-slider-thumb]:size-[13px] [&::-webkit-slider-thumb]:appearance-none [&::-webkit-slider-thumb]:rounded-full [&::-webkit-slider-thumb]:bg-[#a0a0a0]"
        />
      </label>
    </div>
    <div className="flex min-h-0 flex-1">
      <Inspector />
      <div className="flex w-[41px] shrink-0 flex-col justify-between border-r border-[#242424] pb-[4px] pt-[50px] text-[10px] leading-[15px] text-[#9e9e9e]">
        {[100, 75, 50, 25, 0, -25, -50, -75, -100].map((v) => (
          <div key={v} className="flex items-center justify-end gap-[3px]">
            {v}
            <span className="h-px w-[6px] bg-[#8a8a8a]" />
          </div>
        ))}
      </div>
      <EditorCanvas />
    </div>
  </div>
);

/* ---------- loop browser ---------- */
const keywords = [
  ['All Drums', 'Piano', 'Guitars', 'Strings'],
  ['Kits', 'Synths', 'Acoustic Guitar', 'Woodwind'],
  ['Beats', 'Elec Piano', 'Elec Guitar', 'Brass'],
  ['Percussion', 'Organ', 'Slide Guitar', 'Vocals'],
  ['Tambourine', 'Clavinet', 'Bass', 'Impacts'],
  ['Shaker', 'Mallets', 'Synthetic Bass', 'Sound Effects'],
  ['Conga', 'Vibes', 'Elec Bass', 'Jingles'],
];

const keywordClass = (word: string) => {
  if (word === 'All Drums') return 'bg-[#266eb8] text-white';
  if (word === 'Kits' || word === 'Beats') return 'bg-[#505050] text-[#eeeeee] shadow-sm';
  return 'text-[#646464]';
};

const loops: { name: string; beats: number; remote?: boolean }[] = [
  { name: 'Basic Core Beat', beats: 8 },
  { name: 'Basic Vintage Break', beats: 8 },
  { name: 'Bass and Synth Beat', beats: 8, remote: true },
  { name: 'Bass Sweep Topper', beats: 8, remote: true },
  { name: 'Bass Toned Topper', beats: 8, remote: true },
  { name: 'Battery Operated Beat 01', beats: 8, remote: true },
  { name: 'Battery Operated Beat 02', beats: 8, remote: true },
  { name: 'Beat Prophet Hi-Hat 01', beats: 32 },
  { name: 'Beat Prophet Hi-Hat 02', beats: 32 },
  { name: 'Beat Prophet Kick', beats: 32 },
  { name: 'Beat Prophet Snare 01', beats: 32 },
  { name: 'Beat Prophet Snare 02', beats: 32 },
  { name: 'Beautiful Memories Clap', beats: 32 },
  { name: 'Beautiful Memories Fill', beats: 32 },
];

const LoopTable = () => (
  <div className="min-h-0 flex-1 overflow-hidden bg-[#3d3d3d]">
    <table className="h-full w-full table-fixed border-collapse text-left text-sm font-medium">
      <colgroup>
        <col className="w-[34px]" />
        <col />
        <col className="w-[53px]" />
        <col className="w-[22px]" />
      </colgroup>
      <thead className="bg-[#464646] text-[#e0e0e0]">
        <tr className="h-[34px]">
          <th aria-label="Type" className="p-0 pl-2">
            <svg width="15" height="15" viewBox="0 0 15 15" className="block">
              <rect width="15" height="15" rx="2" fill="#3b78b5" />
              <path d="M0 5h15v5H0z" fill="#3aa34c" />
              <path d="M0 10h15v3q0 2-2 2H2q-2 0-2-2z" fill="#c1a136" />
            </svg>
          </th>
          <th className="border-l border-[#3c3c3c] p-0 pl-[10px] font-medium">Name</th>
          <th className="border-l border-[#3c3c3c] p-0 pl-[10px] font-medium">Be...</th>
          <th aria-label="Favorite" className="border-l border-[#3c3c3c] p-0 pl-[8px] text-white">
            <Heart size={15} fill="currentColor" className="block max-w-none" />
          </th>
        </tr>
      </thead>
      <tbody>
        {loops.map((l, i) => {
          const selected = i === 0;
          return (
            <tr key={l.name} className={selected ? 'bg-[#2c6199]' : ''}>
              <td className="p-0 pl-[9px]">
                <LoopWave dim={l.remote} flat={selected} />
              </td>
              <td className={`border-b border-[#363636] p-0 pl-2 ${l.remote ? 'text-[#747474]' : 'text-[#e6e6e6]'}`}>
                <div className="flex items-center justify-between pr-1">
                  {l.name}
                  {l.remote && <CircleArrowDown size={16} strokeWidth={1.8} className="text-[#c4c4c4]" />}
                </div>
              </td>
              <td className={`border-b border-[#363636] p-0 pl-2 ${l.remote ? 'text-[#747474]' : 'text-[#e6e6e6]'}`}>{l.beats}</td>
              <td className="overflow-hidden border-b border-[#363636] p-0 pl-2">
                <input
                  type="checkbox"
                  aria-label={`Favorite ${l.name}`}
                  className={`block h-[15px] w-4 appearance-none rounded-[3px] ${
                    selected ? 'bg-[#4d7cb0]' : l.remote ? 'bg-[#484848]' : 'bg-[#595959]'
                  }`}
                />
              </td>
            </tr>
          );
        })}
      </tbody>
    </table>
  </div>
);

const LoopBrowser = () => (
  <aside className="flex w-[469px] shrink-0 flex-col overflow-hidden rounded-br-[10px] border-2 border-[#6aa1dd] bg-[#464646] text-sm font-medium text-[#eeeeee]">
    <div className="flex h-[36px] shrink-0 items-center pl-3">
      <div className="flex h-[22px] rounded-[5px] bg-[#3b3b3b]">
        <button aria-label="Button view" className="flex w-8 items-center justify-center rounded-[5px] bg-[#266eb8]">
          <svg width="17" height="10" viewBox="0 0 17 10" fill="none" stroke="#dcecff" strokeWidth="1.200">
            <rect x=".8" y="1" width="15.400" height="8" rx="1.500" />
            <path d="M6 1v8M11 1v8" />
          </svg>
        </button>
        <button aria-label="Column view" className="flex w-9 items-center justify-center">
          <svg width="17" height="14" viewBox="0 0 17 14" fill="none" stroke="#eeeeee" strokeWidth="1.300">
            <rect x=".8" y=".8" width="15.400" height="12.400" rx="1.500" />
            <path d="M6 1v12M11 1v12" />
          </svg>
        </button>
      </div>
      <label htmlFor="packs" className="ml-[67px] font-normal text-[#adadad]">
        Sound Packs:
      </label>
      <div className="relative ml-[11px]">
        <select id="packs" className="w-[79px] appearance-none bg-transparent font-medium outline-none">
          <option>Show All</option>
        </select>
        <ChevronsUpDown size={16} className="pointer-events-none absolute right-0 top-[2px] text-[#adadad]" />
      </div>
    </div>
    <div className="flex h-[59px] shrink-0 gap-1 border-b border-[#2c2c2c] px-3 pb-[11px] pt-2">
      <button aria-label="Reset" className="flex w-[42px] items-center justify-center rounded-[5px] bg-[#bd6716]">
        <svg width="15" height="15" viewBox="0 0 15 15">
          <circle cx="7.500" cy="7.500" r="7" fill="white" />
          <path d="m5 5 5 5M10 5l-5 5" stroke="#bd6716" strokeWidth="1.600" />
        </svg>
      </button>
      <button className="flex-1 rounded-[5px] bg-[#266eb8] leading-4">
        <span className="block text-xs leading-4 text-[#b7d5f5]">Instrument</span>
        All Drums
      </button>
      <button className="flex-1 rounded-[5px] bg-[#565656] leading-4 shadow-sm">Genre</button>
      <button className="flex-1 rounded-[5px] bg-[#565656] leading-4 shadow-sm">Descriptors</button>
      <button aria-label="Favorites" className="flex w-[42px] items-center justify-center rounded-[5px] bg-[#4c4c4c] text-[#8d8d8d]">
        <Heart size={15} fill="currentColor" />
      </button>
    </div>
    <div className="h-44 shrink-0 bg-[#3b3b3b] pl-[7px] pr-[6px] pt-[5px] text-xs">
      <div className="grid h-[165px] grid-cols-[115fr_115fr_115fr_107fr] grid-rows-7 items-center">
        {keywords.flat().map((word) => (
          <button key={word} className={`mx-[2px] h-[18px] whitespace-nowrap rounded-[4px] ${keywordClass(word)}`}>
            {word}
          </button>
        ))}
      </div>
    </div>
    <div className="flex h-[41px] shrink-0 items-center border-b border-t border-[#3c3c3c] pl-[11px] pr-[10px]">
      <label htmlFor="scale" className="font-normal text-[#d8d8d8]">
        Scale:
      </label>
      <div className="relative ml-1">
        <select id="scale" className="block h-[22px] w-[83px] appearance-none rounded-[5px] bg-[#595959] pl-[10px] leading-5 shadow-sm outline-none">
          <option>Any</option>
        </select>
        <ChevronsUpDown size={15} className="pointer-events-none absolute right-[4px] top-[4px] text-[#adadad]" />
      </div>
      <label className="ml-[9px] flex h-6 min-w-0 flex-1 items-center rounded-[6px] border-b border-[#646464] bg-[#4f4f4f] pl-1 text-[#9a9a9a]">
        <Search size={15} strokeWidth={2} className="shrink-0" />
        <ChevronDown size={9} strokeWidth={3} className="shrink-0" />
        <input
          aria-label="Search Loops"
          placeholder="Search Loops"
          className="min-w-0 flex-1 bg-transparent pl-[2px] font-normal outline-none placeholder:text-[#7d7d7d]"
        />
      </label>
    </div>
    <LoopTable />
    <footer className="flex h-[37px] shrink-0 items-center border-t border-[#363636] pl-[9px] pr-[11px]">
      <button aria-label="Play loops" className="flex h-[22px] w-[35px] items-center justify-center rounded-[5px] bg-[#595959] shadow-sm">
        <svg width="15" height="12" viewBox="0 0 15 12" fill="white">
          <path d="M.5 4h2.800L8.500.200v11.600L3.300 8H.5z" />
          <circle cx="12.300" cy="6" r="2" />
        </svg>
      </button>
      <div className="ml-auto flex items-center">
        <SpeakerIcon />
        <input
          type="range"
          aria-label="Loop volume"
          defaultValue={72}
          className="-ml-1 h-1 w-[93px] appearance-none rounded-full bg-[#363636] [&::-webkit-slider-thumb]:size-[22px] [&::-webkit-slider-thumb]:appearance-none [&::-webkit-slider-thumb]:rounded-full [&::-webkit-slider-thumb]:bg-[#8b8b8b]"
        />
        <span className="ml-[6px]">
          <SpeakerIcon waves />
        </span>
      </div>
      <span className="ml-[77px] whitespace-nowrap font-normal text-[#b4b4b4]">3487 items</span>
    </footer>
  </aside>
);

export default function App() {
  return (
    <div className="h-screen overflow-hidden bg-linear-to-b from-[#b5249a] to-[#3d1796] font-['Inter','Liberation_Sans',sans-serif]">
      <div className="flex h-full flex-col overflow-hidden rounded-[10px] bg-[#111111]">
        <TitleBar />
        <main className="flex min-h-0 flex-1">
          <div className="flex min-w-0 flex-1 flex-col">
            <div className="flex h-[372px] shrink-0">
              <TrackList />
              <Arrangement />
            </div>
            <div className="h-[2px] shrink-0 bg-[#111111]" />
            <Editor />
          </div>
          <div className="w-px bg-[#111111]" />
          <LoopBrowser />
        </main>
      </div>
    </div>
  );
}
